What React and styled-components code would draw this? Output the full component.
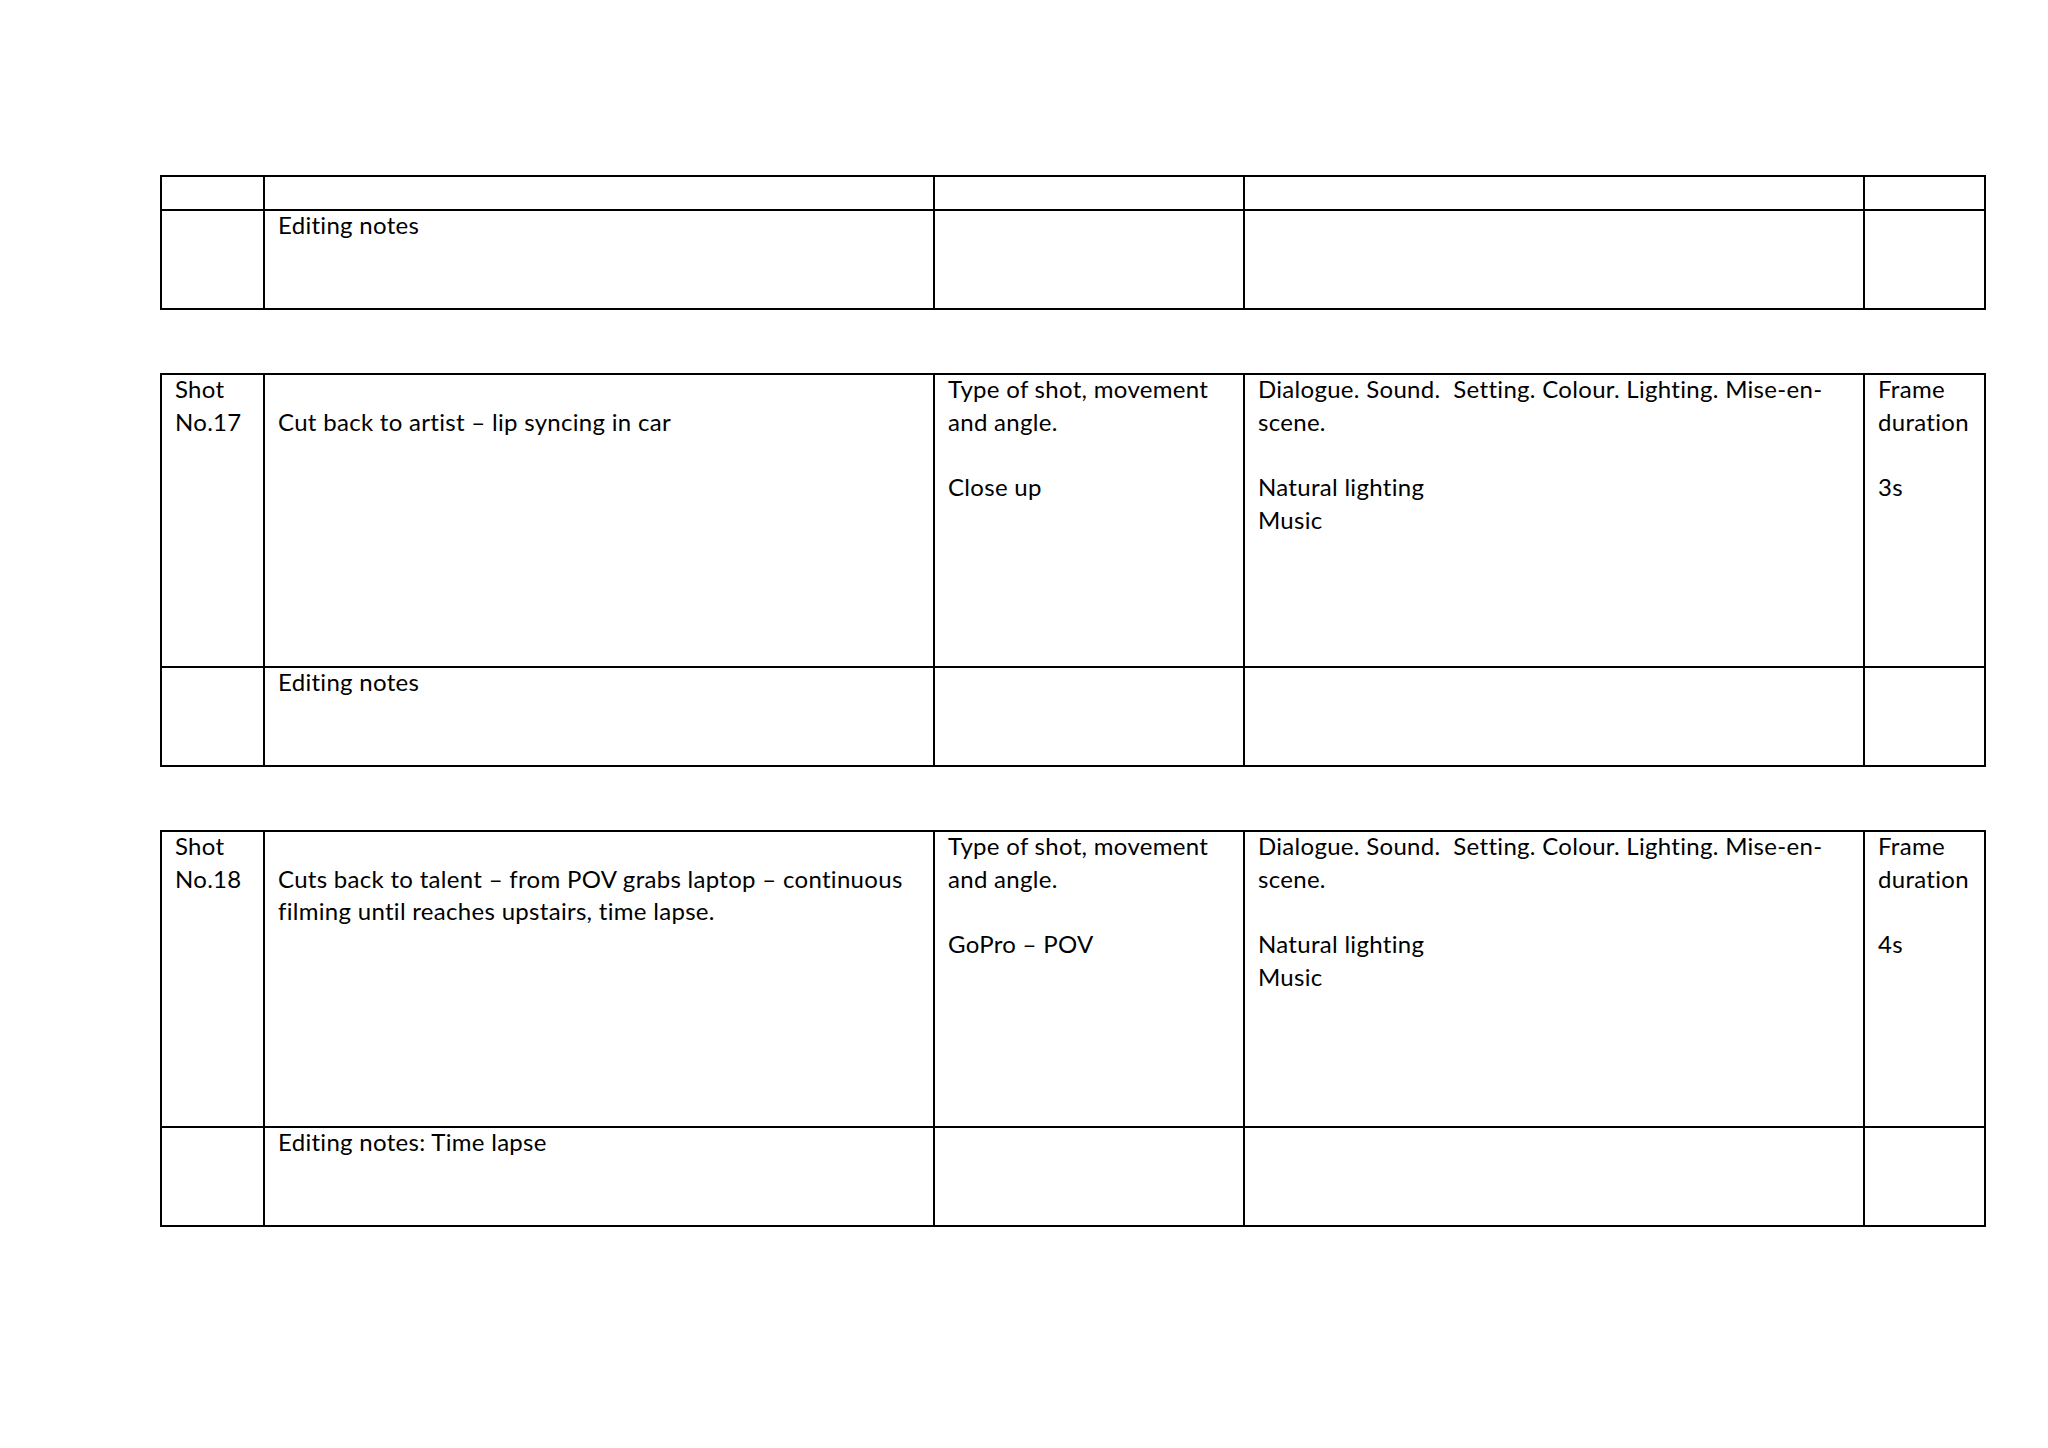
import React from "react";
import styled, { createGlobalStyle } from "styled-components";

const GlobalStyle = createGlobalStyle`
  html, body {
    margin: 0;
    padding: 0;
    background: #ffffff;
  }
  body {
    font-family: Lato, "Open Sans", "Liberation Sans", sans-serif;
    color: #000;
  }
`;

const Page = styled.div`
  width: 2048px;
  min-height: 1448px;
  box-sizing: border-box;
  padding: 175px 0 0 160px;
  display: flex;
  flex-direction: column;
  gap: 63px;
`;

const ShotTable = styled.table`
  width: 1826px;
  border-collapse: collapse;
  table-layout: fixed;
`;

const Col = styled.col`
  width: ${(p) => p.$w}px;
`;

const Row = styled.tr`
  height: ${(p) => p.$h}px;
`;

const Cell = styled.td`
  border: 2px solid #000;
  vertical-align: top;
  padding: 0 4px 0 13px;
  font-size: 24px;
  line-height: 32.65px;
  white-space: pre-wrap;
  letter-spacing: 0.3px;
`;

const Text = styled.div`
  margin-top: -2px;
`;

const columns = [103, 670, 310, 620, 121];

const shotLines = {
  type: (v) => ["Type of shot, movement", "and angle.", "", v],
  sound: () => [
    "Dialogue. Sound.  Setting. Colour. Lighting. Mise-en-",
    "scene.",
    "",
    "Natural lighting",
    "Music",
  ],
  frame: (v) => ["Frame", "duration", "", v],
};

const shots = [
  {
    id: "prev",
    mainHeight: 34,
    cells: [[], [], [], [], []],
    notes: "Editing notes",
  },
  {
    id: "17",
    mainHeight: 293,
    cells: [
      ["Shot", "No.17"],
      ["", "Cut back to artist – lip syncing in car"],
      shotLines.type("Close up"),
      shotLines.sound(),
      shotLines.frame("3s"),
    ],
    notes: "Editing notes",
  },
  {
    id: "18",
    mainHeight: 296,
    cells: [
      ["Shot", "No.18"],
      [
        "",
        "Cuts back to talent – from POV grabs laptop – continuous",
        "filming until reaches upstairs, time lapse.",
      ],
      shotLines.type("GoPro – POV"),
      shotLines.sound(),
      shotLines.frame("4s"),
    ],
    notes: "Editing notes: Time lapse",
  },
];

const Lines = ({ lines }) => (
  <Text>
    {lines.map((line, i) => (
      <React.Fragment key={i}>
        {i > 0 && <br />}
        {line}
      </React.Fragment>
    ))}
  </Text>
);

const Shot = ({ shot }) => (
  <ShotTable>
    <colgroup>
      {columns.map((w, i) => (
        <Col key={i} $w={w} />
      ))}
    </colgroup>
    <tbody>
      <Row $h={shot.mainHeight}>
        {shot.cells.map((lines, i) => (
          <Cell key={i}>{lines.length > 0 && <Lines lines={lines} />}</Cell>
        ))}
      </Row>
      <Row $h={99}>
        <Cell />
        <Cell>
          <Lines lines={[shot.notes]} />
        </Cell>
        <Cell />
        <Cell />
        <Cell />
      </Row>
    </tbody>
  </ShotTable>
);

export default function App() {
  return (
    <>
      <GlobalStyle />
      <Page>
        {shots.map((s) => (
          <Shot key={s.id} shot={s} />
        ))}
      </Page>
    </>
  );
}
